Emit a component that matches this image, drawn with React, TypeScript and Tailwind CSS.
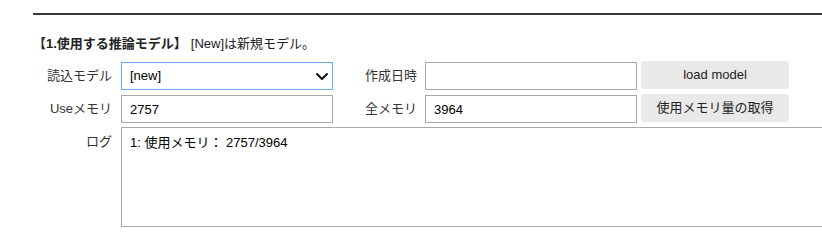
import React from 'react';

const font = { fontFamily: '"Liberation Sans", "Noto Sans CJK JP", sans-serif' };

const inputCls =
  'h-[28px] w-[212px] shrink-0 border border-[#a9a9a9] bg-white px-[8px] text-[13px] text-black outline-none';
const btnCls =
  'h-[28px] w-[148px] shrink-0 rounded-[3px] bg-[#e9e9e9] text-[13px] text-[#222] -mt-[1px] mb-[1px]';
const labelCls = 'w-[88px] shrink-0 pr-[9px] text-right text-[13px]';
const label2Cls = 'ml-[4px] w-[88px] shrink-0 pr-[8px] text-right text-[13px]';

export default function App() {
  return (
    <div className="min-h-screen bg-white pl-[33px] pt-[13px] text-[#333] overflow-hidden" style={font}>
      <div className="h-[2px] bg-[#3a3a3a]" />

      {/* Section title */}
      <div className="mt-[20px] flex items-center h-[18px] text-[13px] text-[#222]">
        <span className="font-bold">【1.使用する推論モデル】</span>
        <span className="ml-[4px]">[New]は新規モデル。</span>
      </div>

      <div className="mt-[9px] flex flex-col gap-[5px]">
        {/* Row 1 */}
        <div className="flex items-center">
          <label className={labelCls}>読込モデル</label>
          <div className="relative flex h-[28px] w-[212px] shrink-0 items-center border border-[#6aa9ec] bg-white px-[8px] text-[13px] text-black">
            <span>[new]</span>
            <svg
              className="absolute right-[3px] top-1/2 -translate-y-1/2"
              width="14"
              height="10"
              viewBox="0 0 14 10"
              fill="none"
            >
              <path d="M2 3l5 5 5-5" stroke="#111" strokeWidth="2" strokeLinecap="round" strokeLinejoin="round" />
            </svg>
          </div>
          <label className={label2Cls}>作成日時</label>
          <input className={inputCls} defaultValue="" />
          <button className={`ml-[4px] ${btnCls}`}>load model</button>
        </div>

        {/* Row 2 */}
        <div className="flex items-center">
          <label className={labelCls}>Useメモリ</label>
          <input className={inputCls} defaultValue="2757" />
          <label className={label2Cls}>全メモリ</label>
          <input className={inputCls} defaultValue="3964" />
          <button className={`ml-[4px] ${btnCls}`}>使用メモリ量の取得</button>
        </div>
      </div>

      {/* Log */}
      <div className="mt-[4px] flex items-start">
        <label className={`${labelCls} pt-[5px]`}>ログ</label>
        <textarea
          className="h-[100px] w-[740px] shrink-0 resize-none border border-[#a9a9a9] bg-white px-[8px] py-[5px] text-[13px] text-black outline-none"
          defaultValue="1: 使用メモリ： 2757/3964"
        />
      </div>
    </div>
  );
}
